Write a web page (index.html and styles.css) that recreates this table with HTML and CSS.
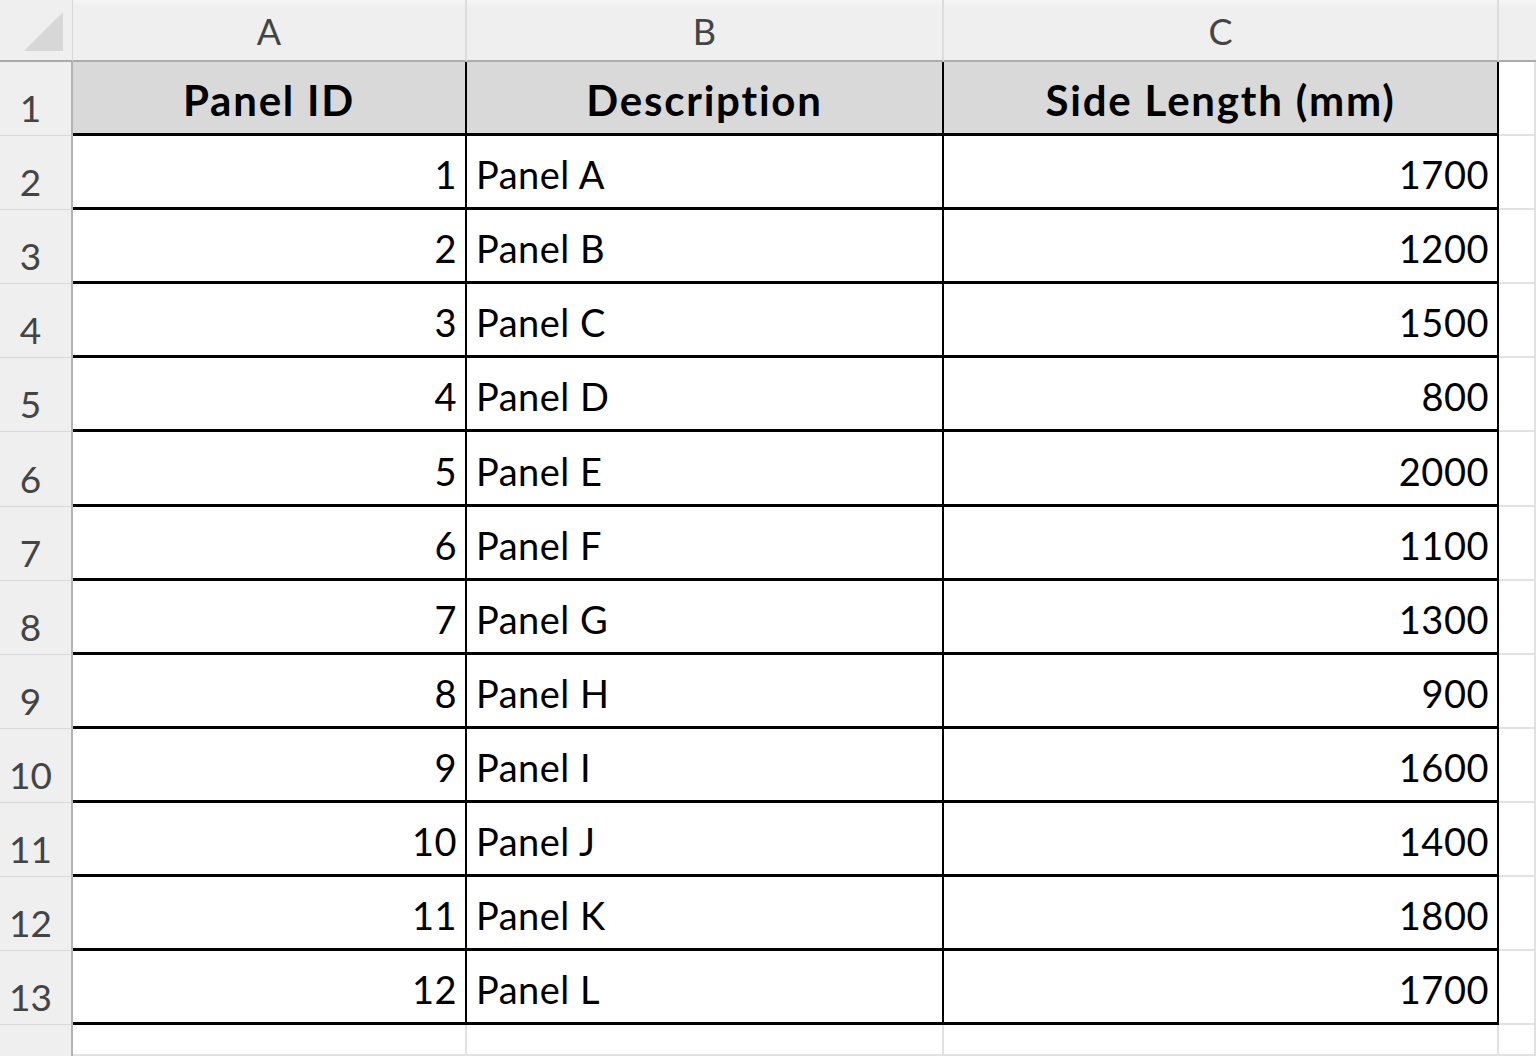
FILE: index.html
```html
<!DOCTYPE html>
<html>
<head>
<meta charset="utf-8">
<link rel="stylesheet" href="styles.css">
</head>
<body>
<div class="sheet">
  <div class="corner"><svg class="tri" width="40" height="40" viewBox="0 0 40 40"><polygon points="0,39 39,39 39,0" fill="#d7d7d7"/></svg></div>
  <div class="colhead">A</div>
  <div class="colhead">B</div>
  <div class="colhead">C</div>
  <div class="colhead last"></div>

  <div class="rowhead">1</div>
  <div class="cell th">Panel ID</div>
  <div class="cell th">Description</div>
  <div class="cell th">Side Length (mm)</div>
  <div class="grid"></div>

  <div class="rowhead">2</div><div class="cell num">1</div><div class="cell txt">Panel A</div><div class="cell num">1700</div><div class="grid"></div>
  <div class="rowhead">3</div><div class="cell num">2</div><div class="cell txt">Panel B</div><div class="cell num">1200</div><div class="grid"></div>
  <div class="rowhead">4</div><div class="cell num">3</div><div class="cell txt">Panel C</div><div class="cell num">1500</div><div class="grid"></div>
  <div class="rowhead">5</div><div class="cell num">4</div><div class="cell txt">Panel D</div><div class="cell num">800</div><div class="grid"></div>
  <div class="rowhead">6</div><div class="cell num">5</div><div class="cell txt">Panel E</div><div class="cell num">2000</div><div class="grid"></div>
  <div class="rowhead">7</div><div class="cell num">6</div><div class="cell txt">Panel F</div><div class="cell num">1100</div><div class="grid"></div>
  <div class="rowhead">8</div><div class="cell num">7</div><div class="cell txt">Panel G</div><div class="cell num">1300</div><div class="grid"></div>
  <div class="rowhead">9</div><div class="cell num">8</div><div class="cell txt">Panel H</div><div class="cell num">900</div><div class="grid"></div>
  <div class="rowhead">10</div><div class="cell num">9</div><div class="cell txt">Panel I</div><div class="cell num">1600</div><div class="grid"></div>
  <div class="rowhead">11</div><div class="cell num">10</div><div class="cell txt">Panel J</div><div class="cell num">1400</div><div class="grid"></div>
  <div class="rowhead">12</div><div class="cell num">11</div><div class="cell txt">Panel K</div><div class="cell num">1800</div><div class="grid"></div>
  <div class="rowhead">13</div><div class="cell num">12</div><div class="cell txt">Panel L</div><div class="cell num">1700</div><div class="grid"></div>

  <div class="rowhead empty"></div><div class="grid"></div><div class="grid"></div><div class="grid"></div><div class="grid"></div>
</div>
</body>
</html>
```
FILE: styles.css
```css
* { box-sizing: border-box; }
html, body { margin: 0; padding: 0; }
body {
  width: 1536px;
  height: 1056px;
  overflow: hidden;
  background: #fff;
  font-family: Lato, "Open Sans", sans-serif;
}
.sheet {
  display: grid;
  grid-template-columns: 73px 394px 477px 555px 1fr;
  grid-template-rows: 62px repeat(13, 74.1px) 1fr;
  height: 1056px;
}
.corner {
  background: #efefef;
  border-right: 1px solid #d8d8d8;
  border-bottom: 2px solid #ababab;
  display: flex;
  align-items: flex-end;
  justify-content: flex-end;
  padding: 0 8px 8px 0;
}
.tri { display: block; }
.colhead {
  background: linear-gradient(#f6f6f6, #efefef 12%);
  border-right: 2px solid #dcdcdc;
  border-bottom: 2px solid #ababab;
  color: #444;
  font-size: 36px;
  line-height: 1;
  display: flex;
  align-items: flex-end;
  justify-content: center;
  padding-bottom: 11px;
}
.colhead.last { border-right: none; }
.rowhead {
  background: #efefef;
  border-right: 2px solid #b3b3b3;
  border-bottom: 1px solid #d8d8d8;
  color: #444;
  font-size: 37px;
  line-height: 1;
  display: flex;
  align-items: flex-end;
  justify-content: center;
  padding: 0 10px 9px 0;
}
.rowhead.empty { border-bottom: none; }
.cell {
  border-right: 2px solid #000;
  border-bottom: 3px solid #000;
  font-size: 38px;
  letter-spacing: 0.5px;
  line-height: 1;
  color: #000;
  display: flex;
  align-items: flex-end;
  padding-bottom: 14px;
}
.th {
  background: #d9d9d9;
  font-weight: 700;
  font-size: 42px;
  letter-spacing: 1.8px;
  justify-content: center;
  padding-bottom: 12px;
}
.num { justify-content: flex-end; padding-right: 8px; }
.txt { justify-content: flex-start; padding-left: 9px; }
.grid {
  border-right: 2px solid #e2e2e2;
  border-bottom: 2px solid #e2e2e2;
}
```
